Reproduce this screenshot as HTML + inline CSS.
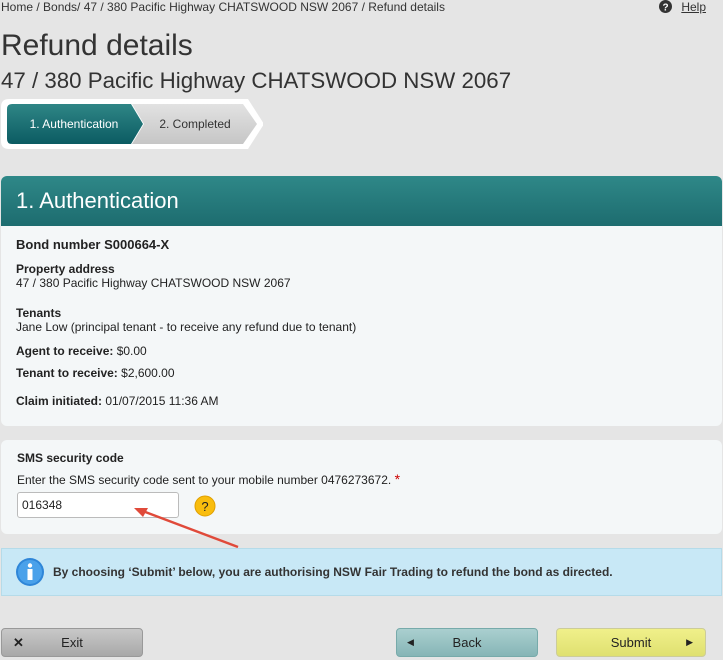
<!DOCTYPE html>
<html><head><style>
*{box-sizing:border-box;margin:0;padding:0}
body{width:723px;height:660px;background:#e5e5e5;font-family:"Liberation Sans",Arial,sans-serif;color:#222;position:relative;overflow:hidden}
.a{position:absolute}
.bc{left:1px;top:0;font-size:12px;color:#333}
.help{right:17px;top:0;font-size:12px;color:#333}
.help span{text-decoration:underline}
.h1{left:1px;top:29px;font-size:30px;color:#333}
.h2{left:1px;top:68px;font-size:22.3px;color:#333}
.step{left:1px;top:99px;width:262px;height:50px}
.hdr{left:1px;top:176px;width:721px;height:50px;background:linear-gradient(#2f8888,#1d6c6f);border-radius:6px 6px 0 0;color:#fff;font-size:22px;padding:12px 15px}
.p1{left:1px;top:226px;width:721px;height:200px;background:#f4f7f8;border-radius:0 0 6px 6px;font-size:12px;padding:0 15px}
.p1 b{font-weight:bold}
.p2{left:1px;top:440px;width:721px;height:94px;background:#f4f7f8;border-radius:6px;font-size:12px;padding:0 16px}
.info{left:1px;top:548px;width:721px;height:48px;background:#c8e8f6;border:1px solid #b5dbe9;font-size:12px;font-weight:bold;color:#333}
.btn{top:628px;height:29px;border-radius:4px;font-size:13px;text-align:center;line-height:27px;border:1px solid #999}
</style></head><body>
<div class="a bc">Home / Bonds/ 47 / 380 Pacific Highway CHATSWOOD NSW 2067 / Refund details</div>
<div class="a help"><svg width="13" height="13" style="vertical-align:-2px;margin-right:9px"><circle cx="6.5" cy="6.5" r="6.5" fill="#333"/><text x="6.5" y="10.5" font-size="10" font-weight="bold" fill="#fff" text-anchor="middle" font-family="Liberation Sans">?</text></svg><span>Help</span></div>
<div class="a h1">Refund details</div>
<div class="a h2">47 / 380 Pacific Highway CHATSWOOD NSW 2067</div>
<svg class="a step" viewBox="0 0 262 50">
<defs><linearGradient id="t" x1="0" y1="0" x2="0" y2="1"><stop offset="0" stop-color="#2f8686"/><stop offset="1" stop-color="#0b5b62"/></linearGradient>
<linearGradient id="g" x1="0" y1="0" x2="0" y2="1"><stop offset="0" stop-color="#e2e2e2"/><stop offset="1" stop-color="#c6c6c6"/></linearGradient></defs>
<path d="M8 0 H247 L263 25 L247 50 H8 Q0 50 0 42 V8 Q0 0 8 0Z" fill="#fff"/>
<path d="M131 5 H242 L256 25 L242 45 H131 L143 25Z" fill="url(#g)"/>
<path d="M11 5 H130 L142 25 L130 45 H11 Q6 45 6 40 V10 Q6 5 11 5Z" fill="url(#t)"/>
<text x="73" y="29" font-size="12" fill="#fff" text-anchor="middle" font-family="Liberation Sans">1. Authentication</text>
<text x="194" y="29" font-size="12" fill="#333" text-anchor="middle" font-family="Liberation Sans">2. Completed</text>
</svg>
<div class="a hdr">1. Authentication</div>
<div class="a p1">
<div style="position:absolute;left:15px;top:11px;font-size:13px;font-weight:bold">Bond number S000664-X</div>
<div style="position:absolute;left:15px;top:36px"><b>Property address</b><br>47 / 380 Pacific Highway CHATSWOOD NSW 2067</div>
<div style="position:absolute;left:15px;top:80px"><b>Tenants</b><br>Jane Low (principal tenant - to receive any refund due to tenant)</div>
<div style="position:absolute;left:15px;top:118px"><b>Agent to receive:</b> $0.00</div>
<div style="position:absolute;left:15px;top:140px"><b>Tenant to receive:</b> $2,600.00</div>
<div style="position:absolute;left:15px;top:168px"><b>Claim initiated:</b> 01/07/2015 11:36 AM</div>
</div>
<div class="a p2">
<div style="position:absolute;left:16px;top:11px;font-weight:bold">SMS security code</div>
<div style="position:absolute;left:16px;top:31px">Enter the SMS security code sent to your mobile number 0476273672. <span style="color:#c00;font-size:14px">*</span></div>
<div style="position:absolute;left:16px;top:52px;width:162px;height:26px;background:#fff;border:1px solid #bbb;border-radius:3px;padding:5px 4px">016348</div>
<svg style="position:absolute;left:193px;top:55px" width="22" height="22"><circle cx="11" cy="11" r="10" fill="#f9bd0e" stroke="#e0a000"/><text x="11" y="16" font-size="13" text-anchor="middle" fill="#222" font-family="Liberation Sans">?</text></svg>
</div>
<svg class="a" style="left:130px;top:505px" width="112" height="46"><line x1="108" y1="42" x2="10" y2="5" stroke="#e04a3a" stroke-width="2.5"/><path d="M4 3 L18 3 L13 12Z" fill="#e04a3a"/></svg>
<div class="a info">
<svg style="position:absolute;left:13px;top:8px" width="30" height="30"><circle cx="15" cy="15" r="14" fill="#2f86d8"/><circle cx="15" cy="15" r="12" fill="#4aa1ea"/><circle cx="15" cy="8.5" r="2.2" fill="#fff"/><rect x="12.5" y="12" width="5" height="11" fill="#fff"/></svg>
<div style="position:absolute;left:51px;top:16px">By choosing ‘Submit’ below, you are authorising NSW Fair Trading to refund the bond as directed.</div>
</div>
<div class="a btn" style="left:1px;width:142px;background:linear-gradient(#c8c8c8,#a8a8a8)"><span style="position:absolute;left:11px;font-weight:bold">✕</span>Exit</div>
<div class="a btn" style="left:396px;width:142px;background:linear-gradient(#aacfcf,#86b5b6);border-color:#7aa"><span style="position:absolute;left:10px;font-size:9px">◀</span>Back</div>
<div class="a btn" style="left:556px;width:150px;background:linear-gradient(#f0f08a,#dfe070);border-color:#cc9"><span style="position:absolute;right:12px;font-size:9px">▶</span>Submit</div>
</body></html>
